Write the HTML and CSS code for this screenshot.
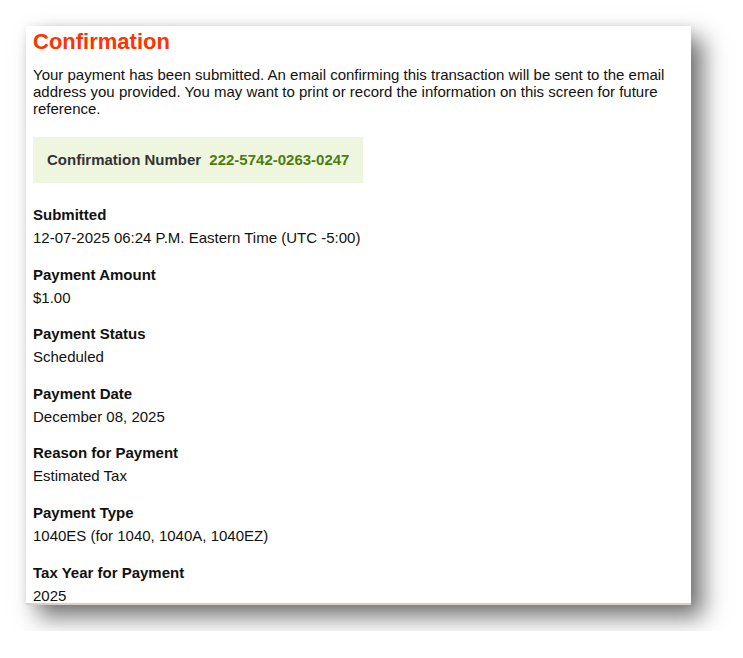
FILE: index.html
```html
<!DOCTYPE html>
<html lang="en">
<head>
    <meta charset="UTF-8">
    <meta name="viewport" content="width=device-width, initial-scale=1.0">
    <title>Payment Confirmation</title>
    <link rel="stylesheet" href="styles.css">
</head>
<body>
    <main class="card">
        <h1>Confirmation</h1>
        <p class="intro">Your payment has been submitted. An email confirming this transaction will be sent to the email address you provided. You may want to print or record the information on this screen for future reference.</p>

        <div class="conf-box">
            <span class="conf-label">Confirmation Number</span>
            <span class="conf-number">222-5742-0263-0247</span>
        </div>

        <dl class="details">
            <div class="item">
                <dt>Submitted</dt>
                <dd>12-07-2025 06:24 P.M. Eastern Time (UTC -5:00)</dd>
            </div>
            <div class="item">
                <dt>Payment Amount</dt>
                <dd>$1.00</dd>
            </div>
            <div class="item">
                <dt>Payment Status</dt>
                <dd>Scheduled</dd>
            </div>
            <div class="item">
                <dt>Payment Date</dt>
                <dd>December 08, 2025</dd>
            </div>
            <div class="item">
                <dt>Reason for Payment</dt>
                <dd>Estimated Tax</dd>
            </div>
            <div class="item">
                <dt>Payment Type</dt>
                <dd>1040ES (for 1040, 1040A, 1040EZ)</dd>
            </div>
            <div class="item">
                <dt>Tax Year for Payment</dt>
                <dd>2025</dd>
            </div>
        </dl>
    </main>
</body>
</html>
```

FILE: styles.css
```css
:root {
    --title: #ff3300;
    --text: #111111;
    --box-bg: #eef6e0;
    --box-label: #333333;
    --box-number: #4e7d0d;
}

* {
    margin: 0;
    padding: 0;
    box-sizing: border-box;
}

body {
    font-family: "Liberation Sans", Arial, sans-serif;
    font-size: 15px;
    color: var(--text);
    background-color: #ffffff;
    padding: 26px;
}

.card {
    width: 665px;
    height: 579px;
    padding: 3px 7px 0;
    background-color: #ffffff;
    border-bottom: 2px solid #d9d0ce;
    overflow: hidden;
    box-shadow: 12px 12px 22px rgba(0, 0, 0, 0.55), 0 0 8px rgba(0, 0, 0, 0.07);
}

h1 {
    color: var(--title);
    font-size: 22px;
    font-weight: bold;
    margin-bottom: 11px;
}

.intro {
    line-height: normal;
}

.conf-box {
    display: inline-block;
    margin-top: 20px;
    padding: 14px;
    background-color: var(--box-bg);
    font-weight: bold;
    line-height: 18px;
}

.conf-label {
    color: var(--box-label);
    margin-right: 4px;
}

.conf-number {
    color: var(--box-number);
}

.details {
    margin-top: 23px;
}

.item {
    margin-bottom: 18.6px;
}

dt {
    font-weight: bold;
    line-height: 18px;
}

dd {
    margin-top: 5px;
    line-height: 18px;
}
```
